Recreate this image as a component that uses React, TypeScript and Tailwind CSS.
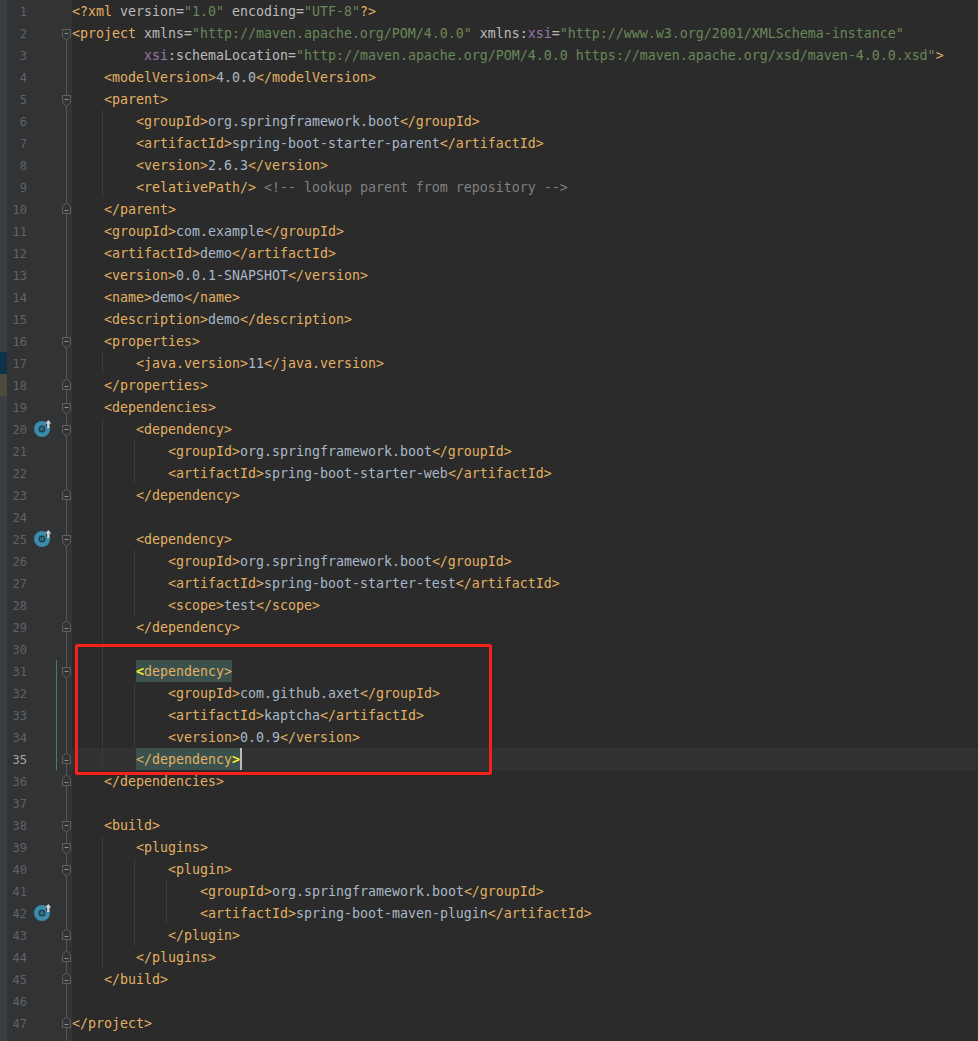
import React from "react"

type Fold = "open" | "close" | "line" | "none"

type Row = {
  text: string
  indent?: number
  guides?: number
  fold?: Fold
  maven?: boolean
}

const rows: Row[] = [
  { text: "@prolog", fold: "none" },
  { text: "@project", fold: "open" },
  { text: "@schema" },
  { text: "<modelVersion>4.0.0</modelVersion>", indent: 1 },
  { text: "<parent>", indent: 1, fold: "open" },
  { text: "<groupId>org.springframework.boot</groupId>", indent: 2, guides: 1 },
  { text: "<artifactId>spring-boot-starter-parent</artifactId>", indent: 2, guides: 1 },
  { text: "<version>2.6.3</version>", indent: 2, guides: 1 },
  { text: "@relative", indent: 2, guides: 1 },
  { text: "</parent>", indent: 1, fold: "close" },
  { text: "<groupId>com.example</groupId>", indent: 1 },
  { text: "<artifactId>demo</artifactId>", indent: 1 },
  { text: "<version>0.0.1-SNAPSHOT</version>", indent: 1 },
  { text: "<name>demo</name>", indent: 1 },
  { text: "<description>demo</description>", indent: 1 },
  { text: "<properties>", indent: 1, fold: "open" },
  { text: "<java.version>11</java.version>", indent: 2, guides: 1 },
  { text: "</properties>", indent: 1, fold: "close" },
  { text: "<dependencies>", indent: 1, fold: "open" },
  { text: "<dependency>", indent: 2, guides: 1, fold: "open", maven: true },
  { text: "<groupId>org.springframework.boot</groupId>", indent: 3, guides: 2 },
  { text: "<artifactId>spring-boot-starter-web</artifactId>", indent: 3, guides: 2 },
  { text: "</dependency>", indent: 2, guides: 1, fold: "close" },
  { text: "", guides: 1 },
  { text: "<dependency>", indent: 2, guides: 1, fold: "open", maven: true },
  { text: "<groupId>org.springframework.boot</groupId>", indent: 3, guides: 2 },
  { text: "<artifactId>spring-boot-starter-test</artifactId>", indent: 3, guides: 2 },
  { text: "<scope>test</scope>", indent: 3, guides: 2 },
  { text: "</dependency>", indent: 2, guides: 1, fold: "close" },
  { text: "", guides: 1 },
  { text: "@open-match", indent: 2, guides: 1, fold: "open" },
  { text: "<groupId>com.github.axet</groupId>", indent: 3, guides: 2 },
  { text: "<artifactId>kaptcha</artifactId>", indent: 3, guides: 2 },
  { text: "<version>0.0.9</version>", indent: 3, guides: 2 },
  { text: "@close-match", indent: 2, guides: 1, fold: "close" },
  { text: "</dependencies>", indent: 1, fold: "close" },
  { text: "" },
  { text: "<build>", indent: 1, fold: "open" },
  { text: "<plugins>", indent: 2, guides: 1, fold: "open" },
  { text: "<plugin>", indent: 3, guides: 2, fold: "open" },
  { text: "<groupId>org.springframework.boot</groupId>", indent: 4, guides: 3 },
  { text: "<artifactId>spring-boot-maven-plugin</artifactId>", indent: 4, guides: 3, maven: true },
  { text: "</plugin>", indent: 3, guides: 2, fold: "close" },
  { text: "</plugins>", indent: 2, guides: 1, fold: "close" },
  { text: "</build>", indent: 1, fold: "close" },
  { text: "" },
  { text: "</project>", fold: "close" },
]

function Tag({ children }: { children: React.ReactNode }) {
  return <span className="text-[#e3b061]">{children}</span>
}

function Attr({ name, value }: { name: string; value: string }) {
  return (
    <>
      <span className="text-[#bababa]"> {name}=</span>
      <span className="text-[#6a8759]">"{value}"</span>
    </>
  )
}

// <tag>value</tag> or a lone tag
function Code({ text }: { text: string }) {
  if (text === "@prolog") {
    return (
      <>
        <Tag>{"<?xml"}</Tag>
        <Attr name="version" value="1.0" />
        <Attr name="encoding" value="UTF-8" />
        <Tag>{"?>"}</Tag>
      </>
    )
  }
  if (text === "@project") {
    return (
      <>
        <Tag>{"<project"}</Tag>
        <Attr name="xmlns" value="http://maven.apache.org/POM/4.0.0" />
        <span className="text-[#bababa]"> xmlns:</span>
        <span className="text-[#9876aa]">xsi</span>
        <span className="text-[#bababa]">=</span>
        <span className="text-[#6a8759]">"http://www.w3.org/2001/XMLSchema-instance"</span>
      </>
    )
  }
  if (text === "@schema") {
    return (
      <span className="ml-[72px]">
        <span className="text-[#9876aa]">xsi</span>
        <span className="text-[#bababa]">:schemaLocation=</span>
        <span className="text-[#6a8759]">
          "http://maven.apache.org/POM/4.0.0 https://maven.apache.org/xsd/maven-4.0.0.xsd"
        </span>
        <Tag>{">"}</Tag>
      </span>
    )
  }
  if (text === "@relative") {
    return (
      <>
        <Tag>{"<relativePath/>"}</Tag>
        <span className="text-[#808080]">{" <!-- lookup parent from repository -->"}</span>
      </>
    )
  }
  if (text === "@open-match") {
    return (
      <span className="bg-[#3b514d] inline-block h-[22px]">
        <span className="text-[#ffef28] font-bold">{"<"}</span>
        <Tag>{"dependency>"}</Tag>
      </span>
    )
  }
  if (text === "@close-match") {
    return (
      <span className="inline-flex h-[22px]">
        <span className="bg-[#3b514d] h-[22px]">
          <Tag>{"</dependency"}</Tag>
          <span className="text-[#ffef28] font-bold">{">"}</span>
        </span>
        <span className="w-[2px] h-[22px] bg-[#bbbbbb]" />
      </span>
    )
  }

  const m = text.match(/^(<[^>]+>)([^<]*)(<\/[^>]+>)?$/)
  if (!m) return <Tag>{text}</Tag>
  return (
    <>
      <Tag>{m[1]}</Tag>
      <span className="text-[#a9b7c6]">{m[2]}</span>
      {m[3] && <Tag>{m[3]}</Tag>}
    </>
  )
}

function FoldMark({ fold, first }: { fold: Fold; first: boolean }) {
  if (fold === "none") return null
  return (
    <svg width="12" height="22" viewBox="0 0 12 22" className="block">
      {!first && <line x1="6.5" y1="0" x2="6.5" y2="22" stroke="#555555" />}
      {first && <line x1="6.5" y1="12" x2="6.5" y2="22" stroke="#555555" />}
      {fold === "open" && (
        <>
          <path d="M2.5 7.5H10.5V14.5L6.5 18.5L2.5 14.5Z" fill="#313335" stroke="#5f5f5f" />
          <path d="M4.5 11.5H8.5" stroke="#8f8f8f" />
        </>
      )}
      {fold === "close" && (
        <>
          <path d="M2.5 15.5H10.5V8.5L6.5 4.5L2.5 8.5Z" fill="#313335" stroke="#5f5f5f" />
          <path d="M4.5 12.5H8.5" stroke="#8f8f8f" />
        </>
      )}
    </svg>
  )
}

function MavenIcon() {
  return (
    <svg width="20" height="20" viewBox="0 0 20 20" className="block">
      <circle cx="10" cy="10" r="8" fill="#3b8bab" />
      <circle cx="10" cy="10" r="2.8" fill="#2f6f8c" stroke="#233f4f" strokeWidth="1.4" />
      <path d="M14 0H20V8H14Z" fill="#313335" />
      <path d="M16.3 9V4" stroke="#cfd6da" strokeWidth="2.4" />
      <path d="M13.3 4.6L16.3 1L19.3 4.6Z" fill="#cfd6da" />
    </svg>
  )
}

function stripColor(n: number) {
  if (n === 17) return "bg-[#0d3349]"
  if (n === 18) return "bg-[#4c4a3f]"
  return "bg-[#3c3f41]"
}

export default function App() {
  return (
    <div className="relative h-[1041px] w-[978px] overflow-hidden bg-[#2b2b2b] font-['DejaVu_Sans_Mono',monospace] text-[13.29px]">
      {rows.map((row, i) => {
        const n = i + 1
        const current = n === 35
        return (
          <div key={n} className="flex h-[22px] leading-[24px] whitespace-pre">
            <div className={`w-[7px] ${stripColor(n)}`} />
            <div className="flex w-[65px] bg-[#313335]">
              <div className={`w-[20px] text-right text-[12px] ${current ? "text-[#a4a3a3]" : "text-[#606366]"}`}>{n}</div>
              <div className="flex w-[29px] items-center justify-center pl-[1px]">{row.maven && <MavenIcon />}</div>
              <div className="w-[4px]">
                {n >= 31 && n <= 35 && <div className="h-full w-px bg-[#4a7a68]" />}
              </div>
              <FoldMark fold={row.fold ?? "line"} first={n === 2} />
            </div>
            <div className={`relative flex flex-1 ${current ? "bg-[#323232]" : ""}`}>
              {Array.from({ length: row.guides ?? 0 }).map((_, g) => (
                <div key={g} className="w-[32px] shrink-0">
                  <div className="ml-[30px] h-full w-px bg-[#3b3b3b]" />
                </div>
              ))}
              {Array.from({ length: (row.indent ?? 0) - (row.guides ?? 0) }).map((_, g) => (
                <div key={g} className="w-[32px] shrink-0" />
              ))}
              <div>
                <Code text={row.text} />
              </div>
            </div>
          </div>
        )
      })}
      <div className="flex h-[7px]">
        <div className="w-[7px] bg-[#3c3f41]" />
        <div className="flex w-[65px] justify-start bg-[#313335]">
          <div className="ml-[59px] h-full w-px bg-[#555555]" />
        </div>
      </div>

      {/* red annotation box */}
      <div className="absolute left-[75px] top-[644px] h-[131px] w-[417px] rounded-[2px] border-[3px] border-[#f5211a]" />
    </div>
  )
}
